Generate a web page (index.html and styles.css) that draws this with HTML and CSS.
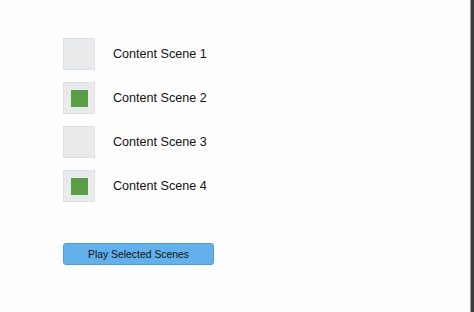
FILE: index.html
```html
<!DOCTYPE html>
<html>
<head>
<meta charset="utf-8">
<link rel="stylesheet" href="styles.css">
</head>
<body>
<div class="page">
  <main class="content">
    <ul class="scenes">
      <li class="scene"><span class="box"></span><span class="label">Content Scene 1</span></li>
      <li class="scene"><span class="box checked"><span class="mark"></span></span><span class="label">Content Scene 2</span></li>
      <li class="scene"><span class="box"></span><span class="label">Content Scene 3</span></li>
      <li class="scene"><span class="box checked"><span class="mark"></span></span><span class="label">Content Scene 4</span></li>
    </ul>
    <button class="play">Play Selected Scenes</button>
  </main>
  <div class="edge"></div>
</div>
</body>
</html>
```

FILE: styles.css
```css
html, body {
  margin: 0;
  padding: 0;
  background: #ffffff;
}
body {
  font-family: "Liberation Sans", Arial, sans-serif;
  color: #111;
}
.page {
  display: flex;
  height: 312px;
  width: 474px;
}
.content {
  flex: 1;
  padding: 38px 0 0 63px;
  background: #fefefe;
}
.scenes {
  list-style: none;
  margin: 0;
  padding: 0;
  display: flex;
  flex-direction: column;
  gap: 12px;
}
.scene {
  display: flex;
  align-items: center;
  gap: 18px;
  height: 32px;
}
.box {
  box-sizing: border-box;
  width: 32px;
  height: 32px;
  background: #e9eaec;
  border: 1px solid #dfe0e2;
  display: flex;
  align-items: center;
  justify-content: center;
}
.mark {
  width: 17px;
  height: 17px;
  background: #5b9e48;
}
.label {
  font-size: 12.6px;
  color: #111;
}
.play {
  margin-top: 41px;
  box-sizing: border-box;
  width: 151px;
  height: 22px;
  background: #62b1ec;
  border: 1px solid #4d9bd6;
  border-radius: 3px;
  font-family: "Liberation Sans", Arial, sans-serif;
  font-size: 10.4px;
  color: #111;
  padding: 0;
  display: block;
}
.edge {
  width: 3px;
  background: #3b3b3b;
  border-left: 1px solid #9a9a9a;
}
```
